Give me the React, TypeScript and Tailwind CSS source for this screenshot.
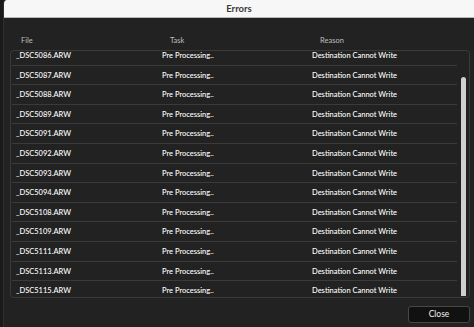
import React, { useEffect, useRef } from "react";

const files = [
  "_DSC5086.ARW",
  "_DSC5087.ARW",
  "_DSC5088.ARW",
  "_DSC5089.ARW",
  "_DSC5091.ARW",
  "_DSC5092.ARW",
  "_DSC5093.ARW",
  "_DSC5094.ARW",
  "_DSC5108.ARW",
  "_DSC5109.ARW",
  "_DSC5111.ARW",
  "_DSC5113.ARW",
  "_DSC5115.ARW",
];

const App: React.FC = () => {
  const listRef = useRef<HTMLDivElement>(null);

  // list is scrolled a little, first row is cut off
  useEffect(() => {
    if (listRef.current) listRef.current.scrollTop = 5;
  }, []);

  return (
    <div
      className="w-[474px] h-[327px] bg-[#1a1a1a] pl-[3px] overflow-hidden"
      style={{ fontFamily: 'Lato, "Open Sans", sans-serif' }}
    >
      <div className="h-full bg-[#222222] rounded-tl-[4px] border-l border-[#2e2e2e] flex flex-col overflow-hidden">
        {/* Title bar */}
        <div className="h-[18px] shrink-0 bg-[#f7f7f7] border-b border-[#b9b9b9] flex items-center justify-center">
          <span className="text-[9.5px] font-bold text-[#3a3a3a] leading-none">Errors</span>
        </div>

        {/* Column headers */}
        <div className="h-[32px] shrink-0 flex items-end pb-[6px] text-[7.5px] text-[#bdbdbd] leading-none">
          <div className="w-[166px] pl-[17px]">File</div>
          <div className="w-[150px]">Task</div>
          <div>Reason</div>
        </div>

        {/* Table */}
        <div className="ml-[6px] mr-[4px] h-[248px] shrink-0 border border-[#3a3a3a] rounded-[4px] flex overflow-hidden">
          <div ref={listRef} className="flex-1 overflow-hidden pl-[1px]">
            {files.map((f) => (
              <div
                key={f}
                className="h-[19.6px] border-b border-[#3a3a3a] flex items-center pt-[1px] text-[7.5px] font-medium text-white leading-none"
              >
                <div className="w-[150px] pl-[4px]">{f}</div>
                <div className="w-[150px]">Pre Processing..</div>
                <div>Destination Cannot Write</div>
              </div>
            ))}
          </div>
          <div className="w-[12px] shrink-0 pl-[4px] pr-[3px] pt-[26px] pb-[1px]">
            <div className="h-full rounded-t-full rounded-b-[2px] bg-[#cfcfcf]" />
          </div>
        </div>

        {/* Footer */}
        <div className="flex justify-end pt-[8px] pr-[4px]">
          <button className="w-[62px] h-[17px] bg-[#111111] border border-[#474747] rounded-[3px] text-[8.5px] text-[#f0f0f0] leading-none">
            Close
          </button>
        </div>
      </div>
    </div>
  );
};

export default App;
